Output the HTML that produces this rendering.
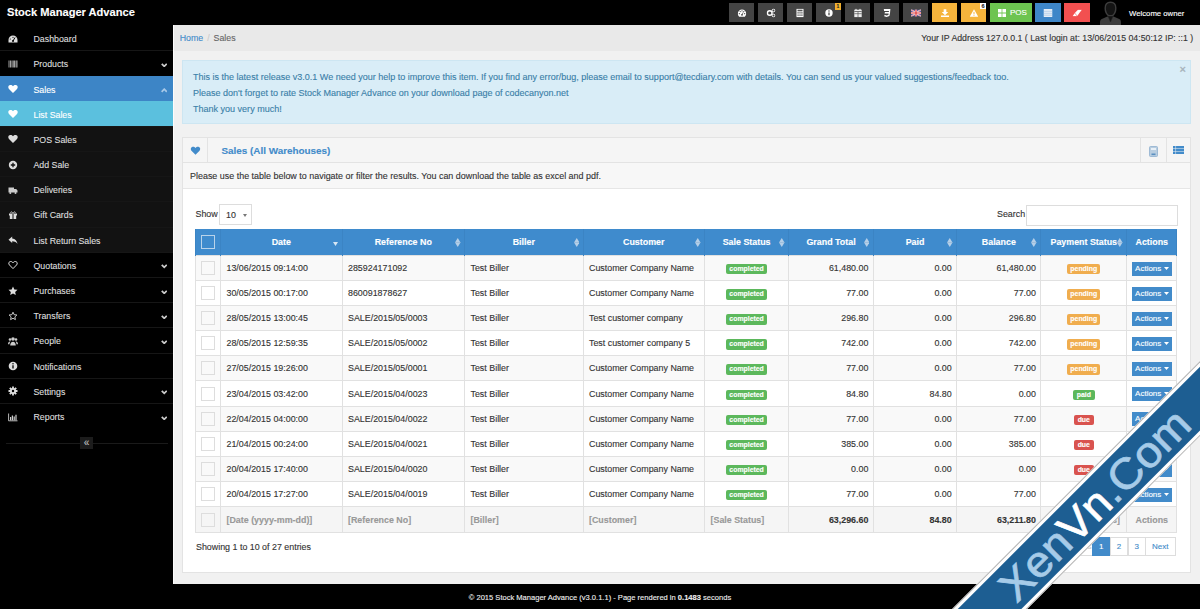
<!DOCTYPE html>
<html><head><meta charset="utf-8">
<style>
*{box-sizing:border-box}
html,body{margin:0;padding:0}
body{width:1200px;height:609px;overflow:hidden;background:#000;font-family:"Liberation Sans",sans-serif;position:relative;color:#333;font-size:9px;-webkit-text-stroke:0.12px currentColor}
.abs{position:absolute}
#hdr{left:0;top:0;width:1200px;height:25px;background:#000}
.brand{left:7px;top:6px;color:#fff;font-weight:bold;font-size:11.1px;line-height:13px;white-space:nowrap}
.tb{position:absolute;top:3px;height:19px;width:25px;background:#3c3c3c}
.tb svg{position:absolute;left:50%;top:50%;transform:translate(-50%,-50%)}
.badge{position:absolute;top:1px;right:0;width:6px;height:8px;font-size:5px;line-height:8px;text-align:center;font-weight:bold}
.welcome{left:1129px;top:8.5px;color:#fff;font-size:7.75px;line-height:10px;white-space:nowrap}
/* sidebar */
#side{left:0;top:25px;width:173px;height:558px;background:#000}
.it{position:absolute;left:0;width:173px;height:25.2px;border-top:1px solid #161616;color:#ddd;font-size:8.8px;white-space:nowrap}
.it .tx{position:absolute;left:33.5px;top:8px;line-height:11px}
.it .ic{position:absolute;left:8px;top:7.5px;width:10px;height:10px}
.it .chev{position:absolute;left:160.5px;top:11.5px}
.sub{background:#121212}
.act{background:#3d85c6;color:#fff;border-top-color:#3d85c6}
.act2{background:#5bc0de;color:#fff;border-top-color:#5bc0de}
/* content */
#content{left:173px;top:25px;width:1027px;height:559px;background:#f1f1f1;border-left:1.2px solid #fcfcfc}
#crumb{left:174.2px;top:25px;width:1026px;height:26px;background:#e9e9e9}
#footer{left:0;top:583.7px;width:1200px;height:25.3px;background:#000;color:#eee;font-size:7.55px;text-align:center;line-height:27px}

#crumb .bc{position:absolute;left:5.5px;top:8px;font-size:8.8px;line-height:11px;color:#666;white-space:nowrap}
#crumb .bc a{color:#428bca;text-decoration:none}
#crumb .bc .sl{color:#ccc;padding:0 4px}
#crumb .ip{position:absolute;right:7px;top:8px;font-size:8.75px;line-height:11px;color:#333;white-space:nowrap}
#alert{left:182px;top:60px;width:1009px;height:64px;background:#d9edf7;border:1px solid #cde6f2;color:#3a7fa8;font-size:9.02px;line-height:16px}
#alert .l{position:absolute;left:10px;white-space:nowrap}
#alert .x{position:absolute;right:4px;top:2.5px;font-size:11px;color:#a9b5bd;font-weight:bold;line-height:11px}
#box{left:182px;top:137px;width:1009px;height:435.5px;background:#fff;border:1px solid #e3e3e3}
#box .bh{position:absolute;left:0;top:0;width:1007px;height:25px;background:#f5f5f5;border-bottom:1px solid #e3e3e3}
#box .intro{position:absolute;left:0;top:25px;width:1007px;height:26px;background:#f7f7f7;border-bottom:1px solid #e6e6e6}

#tbl{border-collapse:collapse;table-layout:fixed;width:982px;font-size:8.9px;color:#333}
#tbl th{height:26.5px;background:#3f8bcd;color:#fff;font-weight:bold;font-size:8.9px;text-align:center;position:relative;padding:0;border-left:1px solid #3b84c4;border-right:1px solid #3b84c4}
#tbl th .so{position:absolute;right:3.5px;top:8.5px}
#tbl td{height:25.1px;border:1px solid #e1e1e1;padding:0 5.5px;white-space:nowrap;overflow:hidden;position:relative}
#tbl tr.odd td{background:#f9f9f9}
#tbl tr.even td{background:#fff}
#tbl tfoot td{height:26.5px;background:#f5f5f5}
#tbl td.r{text-align:right;padding-right:4.5px}
#tbl td.c{text-align:center}
#tbl td.ph{color:#999;font-weight:bold}
#tbl td.tot{font-weight:bold;color:#333}
.cb{display:block;width:14px;height:14px;border:1px solid #ddd;margin-left:-0.5px}
.hcb{border-color:#b9d3ea;margin-left:5.5px}
.lb{display:inline-block;position:relative;top:1px;height:10.4px;line-height:10.4px;color:#fff;font-size:6.9px;font-weight:bold;border-radius:2px;text-align:center;vertical-align:middle}
.abtn{display:inline-block;position:relative;top:0.8px;width:39.5px;height:14px;line-height:14px;background:#428bca;color:#fff;font-size:8px;text-align:center;vertical-align:middle;margin-left:-0.5px;white-space:nowrap}
.abtn svg{vertical-align:middle;margin-top:-1px}
#box .bh .hi{position:absolute;left:0;top:0;width:25px;height:25px;border-right:1px solid #e3e3e3}
#box .bh .tt{position:absolute;left:38.5px;top:7px;font-size:9.9px;line-height:12px;font-weight:bold;color:#428bca;white-space:nowrap}
#box .bh .ri1{position:absolute;left:957px;top:0;width:25.5px;height:25px;border-left:1px solid #e3e3e3}
#box .bh .ri2{position:absolute;left:982.5px;top:0;width:25px;height:25px;border-left:1px solid #e3e3e3}
#box .intro .t{position:absolute;left:7px;top:8px;font-size:8.95px;line-height:11px;color:#333;white-space:nowrap}
.lbl{font-size:8.9px;line-height:11px;color:#333;white-space:nowrap}
.sel{border:1px solid #ddd;background:#fff;font-size:8.9px;color:#333}
.pg{position:absolute;top:537px;height:19px;border:1px solid #ddd;margin-left:-1px;background:#fff;color:#428bca;font-size:8px;line-height:17px;text-align:center}

#rib{left:793.6px;top:478.25px;width:600px;height:52.6px;transform:rotate(-45deg);transform-origin:50% 50%;background:#fff;border-top:1px solid #b4b4b4;border-bottom:1px solid #b4b4b4;padding:2.9px 0}
#rib .in{width:100%;height:100%;background:#1d5e92;text-align:center;line-height:44.8px;white-space:nowrap;position:relative}
#rib .tx{display:inline-block;font-size:43px;color:#a6cbe8;transform:scaleX(1.08);position:relative;top:1.5px;-webkit-text-stroke:0.7px #a6cbe8}
#rib .tx span.w{-webkit-text-stroke:0.7px #fff}
#rib .in span.w{color:#fff}
</style></head>
<body>
<div id="hdr" class="abs"></div>
<div class="abs brand">Stock Manager Advance</div>
<div class="tb" style="left:729px;width:25px;background:#444"><svg width="9" height="8" viewBox="0 0 10 9"><path d="M5 .5A4.7 4.7 0 0 0 .3 5.2C.3 6.6.9 7.8 1.8 8.6h6.4c.9-.8 1.5-2 1.5-3.4A4.7 4.7 0 0 0 5 .5z" fill="#fff"/><circle cx="2" cy="5.3" r=".7" fill="#444"/><circle cx="3" cy="2.9" r=".7" fill="#444"/><circle cx="5" cy="2.1" r=".7" fill="#444"/><circle cx="7" cy="2.9" r=".7" fill="#444"/><circle cx="8" cy="5.3" r=".7" fill="#444"/><circle cx="5" cy="6.6" r="1" fill="#444"/><path d="M5 6.6L6.3 3.8" stroke="#444" stroke-width=".8"/></svg></div>
<div class="tb" style="left:758px;width:25px;background:#444"><svg width="9" height="9" viewBox="0 0 10 10"><circle cx="3.6" cy="5" r="2.6" fill="none" stroke="#fff" stroke-width="1.6"/><circle cx="7.8" cy="2.2" r="1.5" fill="none" stroke="#fff" stroke-width="1.1"/><circle cx="7.8" cy="7.8" r="1.5" fill="none" stroke="#fff" stroke-width="1.1"/></svg></div>
<div class="tb" style="left:787px;width:25px;background:#444"><svg width="8" height="9" viewBox="0 0 8 9"><rect x=".5" y=".3" width="7" height="8.4" fill="#fff"/><rect x="1.5" y="1.2" width="5" height="1.6" fill="#555"/><path d="M1.4 3.8h1.4v1.3H1.4zM3.3 3.8h1.4v1.3H3.3zM5.2 3.8h1.4v1.3H5.2zM1.4 5.9h1.4v1.3H1.4zM3.3 5.9h1.4v1.3H3.3zM5.2 5.9h1.4v1.3H5.2z" fill="#555"/></svg></div>
<div class="tb" style="left:816px;width:25px;background:#444"><svg width="8" height="8" viewBox="0 0 10 10"><circle cx="5" cy="5" r="4.6" fill="#fff"/><path d="M5 4.3v3.6" stroke="#444" stroke-width="1.6"/><circle cx="5" cy="2.6" r=".9" fill="#444"/></svg></div>
<div class="tb" style="left:845px;width:25px;background:#444"><svg width="8" height="9" viewBox="0 0 8 9"><rect x=".3" y="1.2" width="7.4" height="7.5" fill="#eee"/><path d="M2 .2v2M6 .2v2" stroke="#eee" stroke-width="1.1"/><path d="M.3 5.2h7.4M4 3.4v5.3" stroke="#555" stroke-width=".7"/><rect x=".3" y="2.5" width="7.4" height=".8" fill="#555"/></svg></div>
<div class="tb" style="left:874px;width:25px;background:#444"><svg width="8" height="9" viewBox="0 0 8 9"><path d="M.8.6h6.6L7 4.8 6.4 7.6 3.6 8.6 1.2 7.8 1.6 6.3 3.4 7.1 5.4 6.4 5.6 5.1H1.6l.3-1.5h3.9l.2-1.2H1.1z" fill="#fff"/></svg></div>
<div class="tb" style="left:903px;width:25px;background:#444"><svg width="10" height="7" viewBox="0 0 10 7"><rect width="10" height="7" fill="#5a5aa0"/><path d="M0 0L10 7M10 0L0 7" stroke="#fff" stroke-width="1.4"/><path d="M0 0L10 7M10 0L0 7" stroke="#d33" stroke-width=".5"/><path d="M5 0v7M0 3.5h10" stroke="#fff" stroke-width="2.2"/><path d="M5 0v7M0 3.5h10" stroke="#d33" stroke-width="1.2"/></svg></div>
<div class="tb" style="left:932px;width:25px;background:#f5b43c"><svg width="9" height="8" viewBox="0 0 10 9"><path d="M3.5.3h3v3.2h2.2L5 7 1.3 3.5h2.2z" fill="#fff"/><rect x=".5" y="7.3" width="9" height="1.7" fill="#fff"/></svg></div>
<div class="tb" style="left:961px;width:25px;background:#f5b43c"><svg width="9" height="8" viewBox="0 0 10 9"><path d="M5 .3L9.8 8.7H.2z" fill="#fff"/><path d="M5 3.2v2.8" stroke="#f5b43c" stroke-width="1.1"/><circle cx="5" cy="7.1" r=".6" fill="#f5b43c"/></svg></div>
<div class="tb" style="left:990px;width:42px;background:#6dc450"><svg width="8" height="8" viewBox="0 0 8 8" style="left:8px;transform:translate(0,-50%)"><path d="M0 0h3.6v3.6H0zM4.4 0H8v3.6H4.4zM0 4.4h3.6V8H0zM4.4 4.4H8V8H4.4z" fill="#fff"/></svg><span style="position:absolute;left:20px;top:5px;color:#fff;font-size:8px;line-height:9px">POS</span></div>
<div class="tb" style="left:1035px;width:26px;background:#3e86c8"><svg width="9" height="8" viewBox="0 0 9 8"><rect width="9" height="8" fill="#e6eef7"/><path d="M0 2.3h9M0 4.3h9M0 6.2h9" stroke="#9fc0e0" stroke-width=".6"/></svg></div>
<div class="tb" style="left:1064px;width:26px;background:#f25050"><svg width="10" height="7" viewBox="0 0 10 7"><path d="M6 .3h3.8L5 6.7H.6L2.8 3.6z" fill="#fff"/><path d="M2.8 3.6L5.2 6.7" stroke="#f25050" stroke-width=".6"/></svg></div>
<div class="abs" style="left:835px;top:3px;width:6px;height:6.5px;background:#f0b030;color:#222;font-size:5px;line-height:7px;text-align:center;font-weight:bold">1</div>
<div class="abs" style="left:980px;top:3px;width:6px;height:6px;background:#fff;color:#222;font-size:5.5px;line-height:6.5px;text-align:center;font-weight:bold">6</div>
<svg class="abs" style="left:1099px;top:1px" width="23" height="24" viewBox="0 0 23 24"><path d="M1 24v-2.5c0-2 .6-3 1.8-3.6l5.6-2.5h6.2l5.6 2.5c1.2.6 1.8 1.6 1.8 3.6V24z" fill="#3d3d3d"/><path d="M11.5 1.2C8 1.2 6.2 3.6 6.2 7c0 3 1.6 6.3 3.2 7.6h4.2c1.6-1.3 3.2-4.6 3.2-7.6 0-3.4-1.8-5.8-5.3-5.8z" fill="#141414" stroke="#3d3d3d" stroke-width="1.4"/><path d="M9.2 15.5l2.3 5.5 2.3-5.5" fill="#141414" stroke="#222" stroke-width=".6"/></svg>
<div class="abs welcome">Welcome owner</div>

<div id="side" class="abs"></div>
<div class="it" style="top:25.0px;border-top-color:#000"><svg class="ic" viewBox="0 0 10 10"><path d="M5 1.5A4.5 4.5 0 0 0 .5 6v2.5h9V6A4.5 4.5 0 0 0 5 1.5z" fill="#ddd"/><circle cx="5" cy="7" r="1" fill="#000"/><path d="M5 7L7 3.5" stroke="#000" stroke-width="1"/><circle cx="2.3" cy="5" r=".6" fill="#000"/><circle cx="5" cy="3.3" r=".6" fill="#000"/></svg><span class="tx">Dashboard</span></div>
<div class="it" style="top:50.2px"><svg class="ic" viewBox="0 0 10 10"><path d="M1 1.5v7M2.5 1.5v7M4 1.5v7M5.3 1.5v7M6.5 1.5v7M8 1.5v7M9 1.5v7" stroke="#ccc" stroke-width=".8"/></svg><span class="tx">Products</span><svg class="chev" width="6.5" height="4.5" viewBox="0 0 6 4"><path d="M.7.7L3 3 5.3.7" fill="none" stroke="#ccc" stroke-width="1.6"/></svg></div>
<div class="it act" style="top:75.6px"><svg class="ic" viewBox="0 0 10 10"><path d="M5 9L1.2 5.2C-.1 3.9 0 1.9 1.5 1.2 2.8.6 4.2 1.1 5 2.3 5.8 1.1 7.2.6 8.5 1.2 10 1.9 10.1 3.9 8.8 5.2z" fill="#fff"/></svg><span class="tx">Sales</span><svg class="chev" width="6.5" height="4.5" viewBox="0 0 6 4"><path d="M.6 3.4L3 1 5.4 3.4" fill="none" stroke="#a9c9e8" stroke-width="1.6"/></svg></div>
<div class="it act2" style="top:100.6px"><svg class="ic" viewBox="0 0 10 10"><path d="M5 9L1.2 5.2C-.1 3.9 0 1.9 1.5 1.2 2.8.6 4.2 1.1 5 2.3 5.8 1.1 7.2.6 8.5 1.2 10 1.9 10.1 3.9 8.8 5.2z" fill="#fff"/></svg><span class="tx">List Sales</span></div>
<div class="it sub" style="top:125.8px"><svg class="ic" viewBox="0 0 10 10"><path d="M5 9L1.2 5.2C-.1 3.9 0 1.9 1.5 1.2 2.8.6 4.2 1.1 5 2.3 5.8 1.1 7.2.6 8.5 1.2 10 1.9 10.1 3.9 8.8 5.2z" fill="#ddd"/></svg><span class="tx">POS Sales</span></div>
<div class="it sub" style="top:151.0px"><svg class="ic" viewBox="0 0 10 10"><circle cx="5" cy="5" r="4.2" fill="#ddd"/><path d="M5 2.8v4.4M2.8 5h4.4" stroke="#121212" stroke-width="1.3"/></svg><span class="tx">Add Sale</span></div>
<div class="it sub" style="top:176.2px"><svg class="ic" viewBox="0 0 10 10"><path d="M.5 2.5h5.5v5H.5zM6 4h2.2l1.3 1.6v1.9H6z" fill="#ccc"/><circle cx="2.3" cy="8" r="1" fill="#ccc"/><circle cx="7.5" cy="8" r="1" fill="#ccc"/></svg><span class="tx">Deliveries</span></div>
<div class="it sub" style="top:201.4px"><svg class="ic" viewBox="0 0 10 10"><path d="M1 3.5h8v2H1zM1.8 5.5h6.4v3.5H1.8z" fill="#ddd"/><path d="M5 3.5v5.5" stroke="#121212" stroke-width="1"/><path d="M5 3.3C4 1.5 2.5 1.5 2.7 2.8M5 3.3C6 1.5 7.5 1.5 7.3 2.8" stroke="#ddd" fill="none" stroke-width=".9"/></svg><span class="tx">Gift Cards</span></div>
<div class="it sub" style="top:226.6px"><svg class="ic" viewBox="0 0 10 10"><path d="M4.2 1.5L.5 4.8l3.7 3.3V6.2c2.6 0 4.3.8 5.3 2.8C9.2 5.8 7.3 3.6 4.2 3.4z" fill="#ddd"/></svg><span class="tx">List Return Sales</span></div>
<div class="it" style="top:251.8px"><svg class="ic" viewBox="0 0 10 10"><path d="M5 8.6L1.5 5C.4 3.9.6 2.2 1.8 1.7 3 1.2 4.2 1.6 5 2.8 5.8 1.6 7 1.2 8.2 1.7 9.4 2.2 9.6 3.9 8.5 5z" fill="none" stroke="#ddd" stroke-width="1"/></svg><span class="tx">Quotations</span><svg class="chev" width="6.5" height="4.5" viewBox="0 0 6 4"><path d="M.7.7L3 3 5.3.7" fill="none" stroke="#ccc" stroke-width="1.6"/></svg></div>
<div class="it" style="top:277.0px"><svg class="ic" viewBox="0 0 10 10"><path d="M5 .6l1.35 2.9 3.15.35-2.35 2.15.65 3.1L5 7.55 2.2 9.1l.65-3.1L.5 3.85l3.15-.35z" fill="#ddd"/></svg><span class="tx">Purchases</span><svg class="chev" width="6.5" height="4.5" viewBox="0 0 6 4"><path d="M.7.7L3 3 5.3.7" fill="none" stroke="#ccc" stroke-width="1.6"/></svg></div>
<div class="it" style="top:302.2px"><svg class="ic" viewBox="0 0 10 10"><path d="M5 1.2l1.15 2.5 2.75.3-2.05 1.9.55 2.7L5 7.25 2.6 8.6l.55-2.7L1.1 4l2.75-.3z" fill="none" stroke="#ddd" stroke-width=".9"/></svg><span class="tx">Transfers</span><svg class="chev" width="6.5" height="4.5" viewBox="0 0 6 4"><path d="M.7.7L3 3 5.3.7" fill="none" stroke="#ccc" stroke-width="1.6"/></svg></div>
<div class="it" style="top:327.4px"><svg class="ic" viewBox="0 0 10 10"><circle cx="5" cy="3" r="1.8" fill="#ccc"/><circle cx="2" cy="3.5" r="1.3" fill="#ccc"/><circle cx="8" cy="3.5" r="1.3" fill="#ccc"/><path d="M2.2 9.5c0-2.2 1.2-3.8 2.8-3.8s2.8 1.6 2.8 3.8zM0 8.3c0-1.8.8-2.9 2-2.9l.6.2C1.8 6.3 1.5 7.4 1.5 8.3zM10 8.3c0-1.8-.8-2.9-2-2.9l-.6.2c.8.7 1.1 1.8 1.1 2.7z" fill="#ccc"/></svg><span class="tx">People</span><svg class="chev" width="6.5" height="4.5" viewBox="0 0 6 4"><path d="M.7.7L3 3 5.3.7" fill="none" stroke="#ccc" stroke-width="1.6"/></svg></div>
<div class="it" style="top:352.6px"><svg class="ic" viewBox="0 0 10 10"><circle cx="5" cy="5" r="4.3" fill="#ddd"/><path d="M5 4.3v3.2" stroke="#000" stroke-width="1.3"/><circle cx="5" cy="2.8" r=".75" fill="#000"/></svg><span class="tx">Notifications</span></div>
<div class="it" style="top:377.8px"><svg class="ic" viewBox="0 0 10 10"><circle cx="5" cy="5" r="3" fill="#ddd"/><path d="M5 .5v9M.5 5h9M1.8 1.8l6.4 6.4M8.2 1.8L1.8 8.2" stroke="#ddd" stroke-width="1.8"/><circle cx="5" cy="5" r="1.2" fill="#000"/></svg><span class="tx">Settings</span><svg class="chev" width="6.5" height="4.5" viewBox="0 0 6 4"><path d="M.7.7L3 3 5.3.7" fill="none" stroke="#ccc" stroke-width="1.6"/></svg></div>
<div class="it" style="top:403.0px"><svg class="ic" viewBox="0 0 10 10"><path d="M.6 1.5v7.3h8.9" stroke="#ccc" fill="none" stroke-width=".9"/><path d="M2 5h1.2v3.2H2zM3.8 3.5H5v4.7H3.8zM5.6 4.5h1.2v3.7H5.6zM7.4 2.8h1.2v5.4H7.4z" fill="#ccc"/></svg><span class="tx">Reports</span><svg class="chev" width="6.5" height="4.5" viewBox="0 0 6 4"><path d="M.7.7L3 3 5.3.7" fill="none" stroke="#ccc" stroke-width="1.6"/></svg></div>
<div class="abs" style="left:6px;top:443px;width:162px;height:1px;background:#1a1a1a"></div>
<div class="abs" style="left:80px;top:437px;width:13px;height:12px;background:#1c1c1c;color:#bbb;font-size:10px;line-height:11px;text-align:center">&laquo;</div>
<div id="content" class="abs"></div>
<div id="crumb" class="abs"><div class="bc"><a>Home</a><span class="sl">/</span>Sales</div><div class="ip">Your IP Address 127.0.0.1 ( Last login at: 13/06/2015 04:50:12 IP: ::1 )</div></div>
<div id="alert" class="abs"><div class="l" style="top:8px">This is the latest release v3.0.1 We need your help to improve this item. If you find any error/bug, please email to support@tecdiary.com with details. You can send us your valued suggestions/feedback too.</div><div class="l" style="top:24px">Please don't forget to rate Stock Manager Advance on your download page of codecanyon.net</div><div class="l" style="top:40px">Thank you very much!</div><div class="x">&times;</div></div>
<div id="box" class="abs"><div class="bh"><div class="hi"><svg style="position:absolute;left:7px;top:7.5px" width="11" height="9" viewBox="0 0 10 9"><path d="M5 8.8L1.2 5C-.1 3.7 0 1.7 1.5 1 2.8.4 4.2.9 5 2.1 5.8.9 7.2.4 8.5 1 10 1.7 10.1 3.7 8.8 5z" fill="#428bca"/></svg></div><div class="tt">Sales (All Warehouses)</div><div class="ri1"><svg style="position:absolute;left:8px;top:7.5px" width="9" height="11" viewBox="0 0 9 11"><rect x=".5" y=".5" width="8" height="10" rx="1" fill="#b8cde0" stroke="#8fb0cf" stroke-width=".8"/><rect x="2" y="2" width="5" height="2" fill="#e8f0f7"/><rect x="2.5" y="7.5" width="4" height="1.6" fill="#5a8fc0"/></svg></div><div class="ri2"><svg style="position:absolute;left:6px;top:8px" width="11" height="8" viewBox="0 0 11 8"><path d="M0 0h11v2.3H0zM0 2.85h11v2.3H0zM0 5.7h11V8H0z" fill="#428bca"/><path d="M2.6 0v8" stroke="#f5f5f5" stroke-width=".5"/></svg></div></div><div class="intro"><div class="t">Please use the table below to navigate or filter the results. You can download the table as excel and pdf.</div></div></div>
<div class="abs lbl" style="left:195.5px;top:209px">Show</div>
<div class="abs sel" style="left:219px;top:204px;width:33px;height:21px"><span style="position:absolute;left:6px;top:5px;line-height:11px">10</span><svg style="position:absolute;left:23px;top:9px" width="4" height="3" viewBox="0 0 4 3"><path d="M0 0h4L2 3z" fill="#777"/></svg></div>
<div class="abs lbl" style="left:997px;top:209px">Search</div>
<div class="abs sel" style="left:1026px;top:204.5px;width:151.5px;height:21px"></div>
<table id="tbl" class="abs" style="left:194.5px;top:229px">
<colgroup><col style="width:25.5px"><col style="width:121.5px"><col style="width:122.5px"><col style="width:118.5px"><col style="width:121.5px"><col style="width:84.2px"><col style="width:84.7px"><col style="width:83.3px"><col style="width:84.3px"><col style="width:85.6px"><col style="width:50.4px"></colgroup>
<thead><tr>
<th><span class="cb hcb"></span></th>
<th><span class="ht">Date</span><svg class="so" width="5" height="4" viewBox="0 0 5 4" style="top:12.5px"><path d="M0 0h5L2.5 4z" fill="#d7e6f3"/></svg></th>
<th><span class="ht">Reference No</span><svg class="so" width="5.5" height="9" viewBox="0 0 5.5 9"><path d="M2.75 0L5.5 4.5 2.75 9 0 4.5z" fill="#b5cfe8"/><path d="M0 4.5h5.5" stroke="#8fb1d3" stroke-width=".6"/></svg></th>
<th><span class="ht">Biller</span><svg class="so" width="5.5" height="9" viewBox="0 0 5.5 9"><path d="M2.75 0L5.5 4.5 2.75 9 0 4.5z" fill="#b5cfe8"/><path d="M0 4.5h5.5" stroke="#8fb1d3" stroke-width=".6"/></svg></th>
<th><span class="ht">Customer</span><svg class="so" width="5.5" height="9" viewBox="0 0 5.5 9"><path d="M2.75 0L5.5 4.5 2.75 9 0 4.5z" fill="#b5cfe8"/><path d="M0 4.5h5.5" stroke="#8fb1d3" stroke-width=".6"/></svg></th>
<th><span class="ht">Sale Status</span><svg class="so" width="5.5" height="9" viewBox="0 0 5.5 9"><path d="M2.75 0L5.5 4.5 2.75 9 0 4.5z" fill="#b5cfe8"/><path d="M0 4.5h5.5" stroke="#8fb1d3" stroke-width=".6"/></svg></th>
<th><span class="ht">Grand Total</span><svg class="so" width="5.5" height="9" viewBox="0 0 5.5 9"><path d="M2.75 0L5.5 4.5 2.75 9 0 4.5z" fill="#b5cfe8"/><path d="M0 4.5h5.5" stroke="#8fb1d3" stroke-width=".6"/></svg></th>
<th><span class="ht">Paid</span><svg class="so" width="5.5" height="9" viewBox="0 0 5.5 9"><path d="M2.75 0L5.5 4.5 2.75 9 0 4.5z" fill="#b5cfe8"/><path d="M0 4.5h5.5" stroke="#8fb1d3" stroke-width=".6"/></svg></th>
<th><span class="ht">Balance</span><svg class="so" width="5.5" height="9" viewBox="0 0 5.5 9"><path d="M2.75 0L5.5 4.5 2.75 9 0 4.5z" fill="#b5cfe8"/><path d="M0 4.5h5.5" stroke="#8fb1d3" stroke-width=".6"/></svg></th>
<th><span class="ht">Payment Status</span><svg class="so" width="5.5" height="9" viewBox="0 0 5.5 9"><path d="M2.75 0L5.5 4.5 2.75 9 0 4.5z" fill="#b5cfe8"/><path d="M0 4.5h5.5" stroke="#8fb1d3" stroke-width=".6"/></svg></th>
<th>Actions</th>
</tr></thead><tbody>
<tr class="odd"><td><span class="cb"></span></td><td>13/06/2015 09:14:00</td><td>285924171092</td><td>Test Biller</td><td>Customer Company Name</td><td class="c"><span class="lb" style="background:#5cb85c;width:41px">completed</span></td><td class="r">61,480.00</td><td class="r">0.00</td><td class="r">61,480.00</td><td class="c"><span class="lb" style="background:#f0ad4e;width:33px">pending</span></td><td class="c"><span class="abtn">Actions <svg width="5" height="3" viewBox="0 0 5 3"><path d="M0 0h5L2.5 3z" fill="#fff"/></svg></span></td></tr>
<tr class="even"><td><span class="cb"></span></td><td>30/05/2015 00:17:00</td><td>860091878627</td><td>Test Biller</td><td>Customer Company Name</td><td class="c"><span class="lb" style="background:#5cb85c;width:41px">completed</span></td><td class="r">77.00</td><td class="r">0.00</td><td class="r">77.00</td><td class="c"><span class="lb" style="background:#f0ad4e;width:33px">pending</span></td><td class="c"><span class="abtn">Actions <svg width="5" height="3" viewBox="0 0 5 3"><path d="M0 0h5L2.5 3z" fill="#fff"/></svg></span></td></tr>
<tr class="odd"><td><span class="cb"></span></td><td>28/05/2015 13:00:45</td><td>SALE/2015/05/0003</td><td>Test Biller</td><td>Test customer company</td><td class="c"><span class="lb" style="background:#5cb85c;width:41px">completed</span></td><td class="r">296.80</td><td class="r">0.00</td><td class="r">296.80</td><td class="c"><span class="lb" style="background:#f0ad4e;width:33px">pending</span></td><td class="c"><span class="abtn">Actions <svg width="5" height="3" viewBox="0 0 5 3"><path d="M0 0h5L2.5 3z" fill="#fff"/></svg></span></td></tr>
<tr class="even"><td><span class="cb"></span></td><td>28/05/2015 12:59:35</td><td>SALE/2015/05/0002</td><td>Test Biller</td><td>Test customer company 5</td><td class="c"><span class="lb" style="background:#5cb85c;width:41px">completed</span></td><td class="r">742.00</td><td class="r">0.00</td><td class="r">742.00</td><td class="c"><span class="lb" style="background:#f0ad4e;width:33px">pending</span></td><td class="c"><span class="abtn">Actions <svg width="5" height="3" viewBox="0 0 5 3"><path d="M0 0h5L2.5 3z" fill="#fff"/></svg></span></td></tr>
<tr class="odd"><td><span class="cb"></span></td><td>27/05/2015 19:26:00</td><td>SALE/2015/05/0001</td><td>Test Biller</td><td>Customer Company Name</td><td class="c"><span class="lb" style="background:#5cb85c;width:41px">completed</span></td><td class="r">77.00</td><td class="r">0.00</td><td class="r">77.00</td><td class="c"><span class="lb" style="background:#f0ad4e;width:33px">pending</span></td><td class="c"><span class="abtn">Actions <svg width="5" height="3" viewBox="0 0 5 3"><path d="M0 0h5L2.5 3z" fill="#fff"/></svg></span></td></tr>
<tr class="even"><td><span class="cb"></span></td><td>23/04/2015 03:42:00</td><td>SALE/2015/04/0023</td><td>Test Biller</td><td>Customer Company Name</td><td class="c"><span class="lb" style="background:#5cb85c;width:41px">completed</span></td><td class="r">84.80</td><td class="r">84.80</td><td class="r">0.00</td><td class="c"><span class="lb" style="background:#5cb85c;width:21.5px">paid</span></td><td class="c"><span class="abtn">Actions <svg width="5" height="3" viewBox="0 0 5 3"><path d="M0 0h5L2.5 3z" fill="#fff"/></svg></span></td></tr>
<tr class="odd"><td><span class="cb"></span></td><td>22/04/2015 04:00:00</td><td>SALE/2015/04/0022</td><td>Test Biller</td><td>Customer Company Name</td><td class="c"><span class="lb" style="background:#5cb85c;width:41px">completed</span></td><td class="r">77.00</td><td class="r">0.00</td><td class="r">77.00</td><td class="c"><span class="lb" style="background:#d9534f;width:20px">due</span></td><td class="c"><span class="abtn">Actions <svg width="5" height="3" viewBox="0 0 5 3"><path d="M0 0h5L2.5 3z" fill="#fff"/></svg></span></td></tr>
<tr class="even"><td><span class="cb"></span></td><td>21/04/2015 00:24:00</td><td>SALE/2015/04/0021</td><td>Test Biller</td><td>Customer Company Name</td><td class="c"><span class="lb" style="background:#5cb85c;width:41px">completed</span></td><td class="r">385.00</td><td class="r">0.00</td><td class="r">385.00</td><td class="c"><span class="lb" style="background:#d9534f;width:20px">due</span></td><td class="c"><span class="abtn">Actions <svg width="5" height="3" viewBox="0 0 5 3"><path d="M0 0h5L2.5 3z" fill="#fff"/></svg></span></td></tr>
<tr class="odd"><td><span class="cb"></span></td><td>20/04/2015 17:40:00</td><td>SALE/2015/04/0020</td><td>Test Biller</td><td>Customer Company Name</td><td class="c"><span class="lb" style="background:#5cb85c;width:41px">completed</span></td><td class="r">0.00</td><td class="r">0.00</td><td class="r">0.00</td><td class="c"><span class="lb" style="background:#d9534f;width:20px">due</span></td><td class="c"><span class="abtn">Actions <svg width="5" height="3" viewBox="0 0 5 3"><path d="M0 0h5L2.5 3z" fill="#fff"/></svg></span></td></tr>
<tr class="even"><td><span class="cb"></span></td><td>20/04/2015 17:27:00</td><td>SALE/2015/04/0019</td><td>Test Biller</td><td>Customer Company Name</td><td class="c"><span class="lb" style="background:#5cb85c;width:41px">completed</span></td><td class="r">77.00</td><td class="r">0.00</td><td class="r">77.00</td><td class="c"><span class="lb" style="background:#d9534f;width:20px">due</span></td><td class="c"><span class="abtn">Actions <svg width="5" height="3" viewBox="0 0 5 3"><path d="M0 0h5L2.5 3z" fill="#fff"/></svg></span></td></tr>
</tbody><tfoot><tr>
<td><span class="cb"></span></td><td class="ph">[Date (yyyy-mm-dd)]</td><td class="ph">[Reference No]</td><td class="ph">[Biller]</td><td class="ph">[Customer]</td><td class="ph">[Sale Status]</td><td class="r tot">63,296.60</td><td class="r tot">84.80</td><td class="r tot">63,211.80</td><td class="ph c">[Payment Status]</td><td class="ph c">Actions</td>
</tr></tfoot></table>
<div class="abs lbl" style="left:196px;top:542px">Showing 1 to 10 of 27 entries</div>
<div class="pg" style="left:1060px;width:33.8px;color:#c8c8c8">Previous</div>
<div class="pg" style="left:1092.8px;width:18.9px;background:#428bca;border-color:#428bca;color:#fff">1</div>
<div class="pg" style="left:1110.7px;width:18.8px">2</div>
<div class="pg" style="left:1128.5px;width:18.5px">3</div>
<div class="pg" style="left:1146px;width:30.5px">Next</div>

<div id="footer" class="abs"><span id="ft">© 2015 Stock Manager Advance (v3.0.1.1) - Page rendered in <b>0.1483</b> seconds</span></div>
<div id="rib" class="abs"><div class="in"><span class="tx">Xen<span class="w">Vn</span>.Com</span></div></div>
</body></html>
